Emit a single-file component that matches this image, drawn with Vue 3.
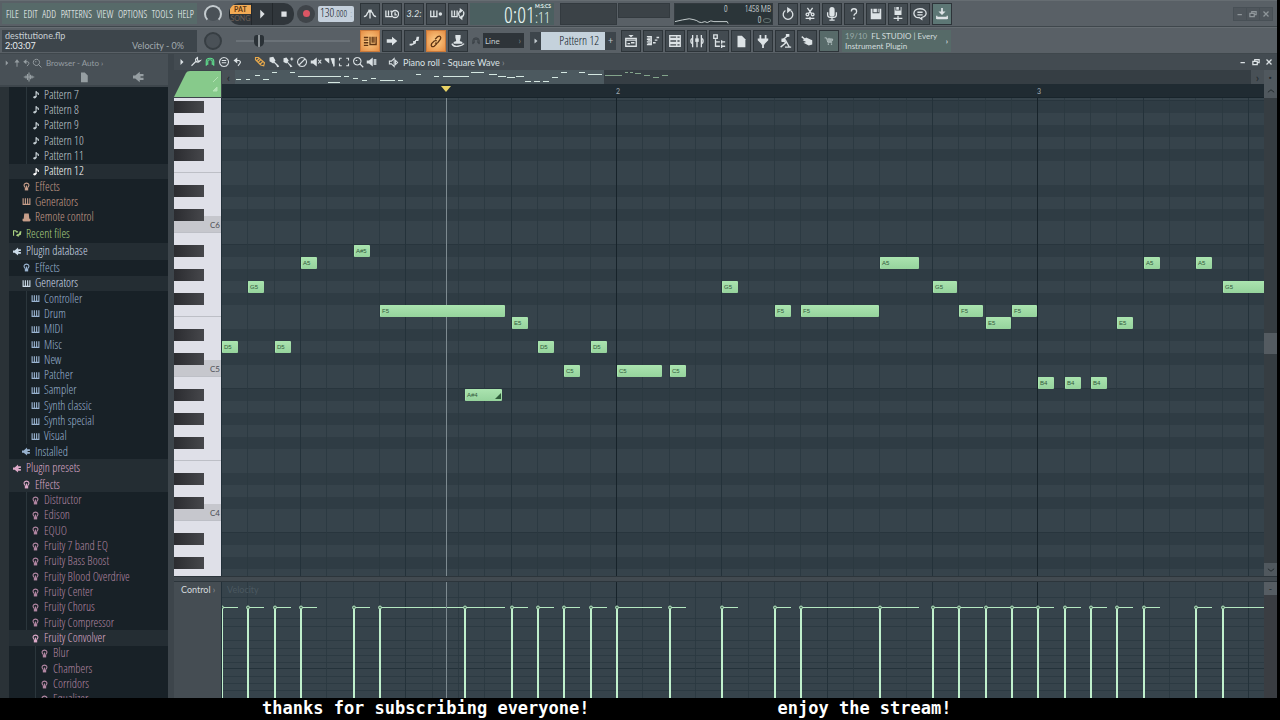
<template>
  <div class="daw">
    <header class="toolbar">
      <div class="bar">
        <nav class="menu">
          <button v-for="m in menus" :key="m" type="button">{{ m }}</button>
        </nav>
        <div class="knob-slot"><span class="knob bright" /></div>
        <div class="transport">
          <button type="button" class="pat-song"><b>PAT</b><i>SONG</i></button>
          <button type="button" aria-label="Play">
            <svg viewBox="0 0 16 16"><path class="f" d="M6 3l5 5-5 5z" /></svg>
          </button>
          <button type="button" aria-label="Stop">
            <svg viewBox="0 0 16 16"><path class="f" d="M5 5h6v6H5z" /></svg>
          </button>
        </div>
        <button type="button" class="record" aria-label="Record"><span /></button>
        <div class="tempo">
          <button type="button" aria-label="Tempo"><b>130</b>.000</button>
          <span>:</span>
        </div>
        <div class="tools">
          <button v-for="n in recTools" :key="n" type="button" class="tool" :aria-label="n">
            <em v-if="n === 'countdown'">3.2:</em>
            <svg v-else viewBox="0 0 16 16">
              <path class="s" :d="icons[n].s" />
              <path class="f" :d="icons[n].f" />
            </svg>
          </button>
        </div>
        <div class="clock"><span>0:01</span><div><sup>M:S:CS</sup><small>:11</small></div></div>
        <div class="panel scope" />
        <div class="panel scope-small" />
        <div class="panel cpu">
          <svg viewBox="0 0 60 20"><path d="M1 18q8-2 15-3 6 1 8 2 2 2 5 2 4-2 6 0 4-3 7-1h14l1 2" /></svg>
          <span>0</span>
          <div><span>1458 MB</span><span>0 <i /></span></div>
        </div>
        <div class="tools right-tools">
          <button
            v-for="n in fileTools"
            :key="n"
            type="button"
            class="tool"
            :class="{ teal: n === 'download' }"
            :aria-label="n"
          >
            <svg viewBox="0 0 16 16">
              <path class="s" :d="icons[n].s" />
              <path class="f" :d="icons[n].f" />
            </svg>
          </button>
        </div>
        <div class="window-buttons raised">
          <button v-for="n in windowTools" :key="n" type="button" :aria-label="n">
            <svg viewBox="0 0 16 16"><path class="s" :d="icons[n].s" /></svg>
          </button>
        </div>
      </div>

      <div class="bar">
        <div class="hint">
          <p>destitutione.flp</p>
          <p><b>2:03:07</b><span>Velocity - 0%</span></p>
        </div>
        <div class="knob-slot"><span class="knob" /></div>
        <div class="shift">
          <input type="range" min="0" max="100" value="17" aria-label="Song position">
        </div>
        <div class="tools">
          <button
            v-for="n in editTools"
            :key="n"
            type="button"
            class="tool"
            :class="{ lit: n === 'typing' || n === 'link' }"
            :aria-label="n"
          >
            <svg viewBox="0 0 16 16">
              <path class="s" :d="icons[n].s" />
              <path class="f" :d="icons[n].f" />
            </svg>
          </button>
        </div>
        <svg class="snap-icon" viewBox="0 0 16 16"><path class="s" :d="icons.magnet.s" /></svg>
        <div class="snap">
          <select aria-label="Snap"><option>Line</option></select>
          <span>›</span>
        </div>
        <div class="pattern">
          <button type="button" aria-label="Pattern menu">
            <svg viewBox="0 0 16 16"><path class="f" d="M5 3l6 5-6 5z" /></svg>
          </button>
          <select aria-label="Pattern"><option>Pattern 12</option></select>
          <button type="button" aria-label="New pattern">+</button>
        </div>
        <div class="tools">
          <button
            v-for="n in viewTools"
            :key="n"
            type="button"
            class="tool"
            :class="{ dim: n === 'cart' }"
            :aria-label="n"
          >
            <svg viewBox="0 0 16 16">
              <path class="s" :d="icons[n].s" />
              <path class="f" :d="icons[n].f" />
            </svg>
          </button>
        </div>
        <a class="news" href="#">
          <span><i>19/10</i>&nbsp; FL STUDIO | Every<br>Instrument Plugin</span><b>›</b>
        </a>
      </div>
    </header>

    <main class="workspace">
      <aside class="browser">
        <div class="browser-head">
          <div class="browser-title">
            <svg v-for="n in ['play', 'up', 'undo', 'zoom']" :key="n" viewBox="0 0 16 16">
              <path class="s" :d="icons[n].s" />
              <path class="f" :d="icons[n].f" />
            </svg>
            <span>Browser - Auto ›</span>
          </div>
          <div class="browser-tabs">
            <button v-for="n in ['wave', 'page', 'plugin']" :key="n" type="button" :aria-label="n">
              <svg viewBox="0 0 16 16">
                <path class="s" :d="icons[n].s" />
                <path class="f" :d="icons[n].f" />
              </svg>
            </button>
          </div>
        </div>
        <div class="tree-view">
          <div class="tree-rail" />
          <ul class="tree">
            <li
              v-for="(row, i) in tree"
              :key="i"
              :class="[row.tone, 'level-' + row.level, { selected: row.selected }]"
            >
              <svg viewBox="0 0 16 16">
                <path class="s" :d="icons[row.icon].s" />
                <path class="f" :d="icons[row.icon].f" />
              </svg>
              <span>{{ row.text }}</span>
            </li>
          </ul>
        </div>
      </aside>

      <section class="roll">
        <div class="roll-title">
          <button
            v-for="n in rollTools"
            :key="n"
            type="button"
            :class="n"
            :aria-label="n"
          >
            <svg viewBox="0 0 16 16">
              <path class="s" :d="icons[n].s" />
              <path class="f" :d="icons[n].f" />
            </svg>
          </button>
          <svg class="roll-speaker" viewBox="0 0 16 16"><path class="s" d="M2 6h3l4-4v12l-4-4H2zM11 5v6l3-3z" /></svg>
          <h1>Piano roll - Square Wave <span>›</span></h1>
          <div class="window-buttons">
            <button v-for="n in windowTools" :key="n" type="button" :aria-label="n">
              <svg viewBox="0 0 16 16"><path class="s" :d="icons[n].s" /></svg>
            </button>
          </div>
        </div>

        <div class="roll-body">
          <div class="corner">
            <svg viewBox="0 0 48 28">
              <path class="tab" d="M0 27L12 3Q13 1 16 1H47V27z" />
              <path class="mark" d="M39 12l5-5M39 21h4v-4z" />
            </svg>
          </div>
          <div class="overview">
            <button type="button" aria-label="Scroll left">‹</button>
            <svg class="mini">
              <rect x="0" y="0" width="369" height="14" />
              <path
                v-for="(m, i) in mini"
                :key="i"
                :class="{ later: m[0] > 369 }"
                :d="`M${m[0]} ${m[1]}.5h${m[2]}`"
              />
            </svg>
            <button type="button" aria-label="Scroll right">›</button>
          </div>
          <button type="button" class="dot-button" aria-label="Zoom">▪</button>
          <div class="ruler">
            <span v-for="b in bars" :key="b.label" :style="{ left: b.x + 'px' }">{{ b.label }}</span>
            <i class="playmark" />
          </div>
          <button type="button" class="scroll-up" aria-label="Scroll up">
            <svg viewBox="0 0 16 16"><path class="s" d="M3 10l5-4 5 4" /></svg>
          </button>

          <div class="keys">
            <div class="lanes">
              <div v-for="r in lanes" :key="r.index" class="key" :class="r.kind">
                <span v-if="r.label">{{ r.label }}</span>
              </div>
            </div>
          </div>
          <div class="grid">
            <div class="lanes">
              <div v-for="r in lanes" :key="r.index" class="lane" :class="r.kind" />
              <div
                v-for="(n, i) in notes"
                :key="i"
                class="note"
                :style="{
                  left: noteX(n) + 'px',
                  top: noteRow(n) * 12 + 'px',
                  width: Math.round(n[2] * STEP) + 'px'
                }"
              >
                {{ n[0] }}<i v-if="n[0] === 'A#4'" />
              </div>
            </div>
            <svg class="lines">
              <line
                v-for="l in gridLines"
                :key="l.x"
                :class="l.kind"
                :x1="l.x"
                :x2="l.x"
                y1="0"
                y2="100%"
              />
            </svg>
            <i class="playhead" />
          </div>
          <div class="scroll-track">
            <div class="thumb" />
            <button type="button" aria-label="Scroll down">
              <svg viewBox="0 0 16 16"><path class="s" d="M3 6l5 4 5-4" /></svg>
            </button>
          </div>

          <div class="splitter" />

          <div class="control-label">Control <span>›</span></div>
          <div class="velocity">
            <span class="ghost">Velocity</span>
            <svg>
              <line
                v-for="y in [15, 36, 44, 58, 66, 73, 80, 94, 101, 108]"
                :key="'h' + y"
                class="sub"
                x1="0"
                x2="100%"
                :y1="y + 0.5"
                :y2="y + 0.5"
              />
              <line class="beat" x1="0" x2="100%" y1="86.5" y2="86.5" />
              <line
                v-for="l in gridLines"
                :key="l.x"
                :class="l.kind"
                :x1="l.x"
                :x2="l.x"
                y1="0"
                y2="100%"
              />
              <g v-for="(n, i) in notes" :key="i" class="stem">
                <path :d="`M${noteX(n)} 25.5h${Math.round(n[2] * STEP)}`" />
                <rect :x="noteX(n) - 1" y="26" width="2" height="100%" />
                <circle :cx="noteX(n)" cy="25.5" r="1.5" />
              </g>
            </svg>
            <i class="playhead" />
          </div>
          <div class="velocity-track"><button type="button" aria-label="Reset">-</button></div>
        </div>
      </section>
    </main>

    <footer class="banner">
      <span>thanks for subscribing everyone!</span>
      <span>enjoy the stream!</span>
    </footer>
  </div>
</template>

<script setup>
const STEP = 26.33
const NAMES = ['C', 'C#', 'D', 'D#', 'E', 'F', 'F#', 'G', 'G#', 'A', 'A#', 'B']
// semitone of the first (partly hidden) lane, counted from C0
const TOP = 6 * 12 + 11

const menus = ['FILE', 'EDIT', 'ADD', 'PATTERNS', 'VIEW', 'OPTIONS', 'TOOLS', 'HELP']
const recTools = ['metronome', 'wait', 'countdown', 'overdub', 'loop']
const fileTools = ['reload', 'cut', 'mic', 'help', 'save', 'saveNew', 'chat', 'download']
const editTools = ['typing', 'arrow', 'slide', 'link', 'stamp']
const viewTools = ['playlist', 'pianoroll', 'steps', 'mixer', 'treeIcon', 'page', 'plug', 'tempoTap', 'hand', 'cart']
const windowTools = ['minimize', 'restore', 'close']
const rollTools = [
  'play', 'wrench', 'magnet', 'options', 'undo', 'pencil', 'brush', 'paint',
  'ban', 'mute', 'slice', 'select', 'zoom', 'speaker'
]

const icons = {
  metronome: { s: 'M1 11q3 0 4-4 1-2 3-2t3 2q1 4 4 4M8 4v9', f: 'M6 3h4v3H6z' },
  wait: { s: 'M1 4v7h7M4 4v6M7 4v2M11.5 4a4 4 0 1 1 0 8a4 4 0 1 1 0-8M11.5 6v3h2', f: '' },
  overdub: { s: 'M2 4v7h7V4M5.5 4v7', f: 'M13 6a2 2 0 1 1 0 4a2 2 0 1 1 0-4' },
  loop: { s: 'M1 4v7h6V4M4 4v6M10 11q-3-4 1-7M14 5q2 4-2 7', f: 'M10 1l4 3-4 3zM13 9l-4 3 4 3z' },
  reload: { s: 'M5 4a5.500 5.500 0 1 0 6 0', f: 'M7 0l5 3-5 4z' },
  cut: { s: 'M5 1l5 7M11 1L6 8M5 7a1.500 1.500 0 1 0 .1 0M11 7a1.500 1.500 0 1 0 .1 0M3 13h10M8 11v4', f: '' },
  mic: { s: 'M3 6v3q0 3 5 3t5-3V6M8 12v3M5 15h6', f: 'M5 3q0-3 3-3t3 3v6q0 2-3 2T5 9z' },
  help: { s: 'M5 5q0-3 3-3t3 3q0 2-2 3-1 1-1 2', f: 'M7 12h2v2H7z' },
  save: { s: '', f: 'M2 2h2v5h8V2h2v12H2zM5 2h4v4H5zM10 2h1v4h-1z' },
  saveNew: { s: 'M3 13h10M8 10v6', f: 'M4 0h1v4h6V0h1v9H4zM6 0h3v3H6z' },
  chat: { s: 'M8 2C3 2 1 5 1 7.500S4 13 7 12l3 2v-2c3-1 5-2 5-5S12 2 8 2M5 6h6M5 9h6', f: '' },
  download: { s: 'M2 10v3h12v-3', f: 'M7 1h2v4h3l-4 4-4-4h3zM2 11h12v3H2z' },
  typing: { s: 'M1 4h5M1 7h5M1 10h5M1 13h5M8 3v9h7V3M10.500 3v7M12.500 3v7', f: '' },
  arrow: { s: '', f: 'M2 6h6V3l6 5-6 5v-3H2z' },
  slide: { s: 'M5 12q4 0 5-5', f: 'M11 3h3l-1 5h-3zM7 8h3v3H7zM3 11h3v2H3z' },
  link: { s: 'M7 6l3-3q2-1 3 0t0 3l-3 4q-2 1-3 0M9 8q-1-1-3 0l-3 3q-1 2 0 3t3 0l3-3', f: '' },
  stamp: { s: 'M1 11q2 4 7 3t7-3', f: 'M5 1h6v3l-1 4 3 1v2H3V9l3-1-1-4z' },
  magnet: { s: 'M3 13V7q0-4 5-4t5 4v6M3 11h2v-4q0-2 3-2t3 2v4h2', f: '' },
  playlist: { s: 'M2 5h12v9H2zM2 7h12M4 11h3M8 10h4', f: 'M5 1h6L8 4z' },
  pianoroll: { s: 'M1 3h5v9H1M1 6h4M1 9h4M8 10h3M10 7h3M12 4h3', f: 'M2 4h4v1H2zM2 7h4v1H2zM2 10h4v1H2z' },
  steps: { s: 'M2 2h12v3H2zM2 6.500h12v3H2zM2 11h12v3H2zM10 2v12', f: '' },
  mixer: { s: 'M3 1v14M8 1v14M13 1v14M2 5q-2 3 0 6M14 5q2 3 0 6', f: 'M6 5h4v4H6z' },
  treeIcon: { s: 'M2 1h4v4H2zM4 6v8h5M4 9h5M11 7v4M11 9h4M11 12v4M11 14h4', f: '' },
  page: { s: '', f: 'M4 2h5l4 4v9H4z' },
  plug: { s: '', f: 'M4 1h2v4h4V1h2v4h2v2l-4 4v1H9v4H7v-4H6v-1L2 7V5h2z' },
  tempoTap: { s: 'M11 2L5 7l4 3-6 5M8 6l5 9M8 15h7', f: 'M9 0h4v3H9zM4 5h4v4H4z' },
  hand: { s: 'M2 3l6 5', f: 'M3 7l4-3 7 3v5l-4 1-6-3 3-1z' },
  cart: { s: 'M1 3h3l2 7h7M5 5h9l-1 3H6M8 3v7M11 4v6', f: 'M6 12h2v2H6zM11 12h2v2h-2z' },
  minimize: { s: 'M4 9h7', f: '' },
  restore: { s: 'M3 7h7v5H3zM6 7V4h7v5h-3', f: '' },
  close: { s: 'M4 4l8 8M12 4l-8 8', f: '' },
  play: { s: '', f: 'M6 4l4 4-4 4z' },
  up: { s: 'M8 14V5', f: 'M4 7l4-5 4 5z' },
  undo: { s: 'M6 6h3q3 1 2 3t-3 4', f: 'M2 6l5-4v8z' },
  zoom: { s: 'M7 2a5 5 0 1 0 .1 0M11 11l4 4M5 6h2', f: '' },
  wave: { s: 'M1 8h14M4 6v4M6 4v8M8 2v12M10 5v6M12 6v4', f: '' },
  plugin: { s: '', f: 'M0 6h3l6-5v3h5v3h-4v2h4v3H9v3l-6-5H0z' },
  wrench: { s: 'M2 13l6-6M10 2q-4 2-2 5 3 3 6-1l-3 1-1-2z', f: '' },
  options: { s: 'M8 2a6 6 0 1 0 .1 0M5 6h6M5 9h6', f: '' },
  pencil: { s: 'M2 2l4 0 8 7-1 4-4-1-7-7zM4 6l3-3M8 11l4-4M6 8l3-3', f: '' },
  brush: { s: 'M8 8l6 6', f: 'M2 2l5-1 3 5-3 4-5-3zM11 10l4 4-3 1z' },
  paint: { s: 'M7 8l5 6M11 4h4M13 2v4', f: 'M2 3l4-1 3 4-3 4-4-2zM10 10l4 4-3 1z' },
  ban: { s: 'M8 2a6 6 0 1 0 .1 0M4 12l8-8', f: '' },
  mute: { s: 'M11 5l4 5M15 5l-4 5', f: 'M1 6h3l5-4v12l-5-4H1z' },
  slice: { s: 'M9 4h4v10', f: 'M1 3h6v7L1 5zM9 3h5v11l-3-4z' },
  select: { s: 'M2 6V3h3M11 3h3v3M14 10v3h-3M5 13H2v-3', f: '' },
  speaker: { s: 'M11 4v8M13 4v8', f: 'M1 6h3l5-4v12l-5-4H1z' },
  note: { s: 'M9 12V2q1 3 4 4v3', f: 'M10 10v2q-1 3-4 3-3-1-2-3 2-2 6-2z' },
  fx: { s: 'M6 10q-4-4-1-7 3-2 6 0 3 3-1 7M8 11V6', f: 'M5 10h6v5H5z' },
  gen: { s: 'M2 2v11h12V2M6 2v10M10 2v10', f: '' },
  remote: { s: 'M2 14h12', f: 'M4 1h8l1 9h2v4H1v-4h2z' },
  folder: { s: 'M1 12V3h4l1 2h3', f: 'M12 4l3 0-1 6-4 2v2l-5-3 5-3v2z' }
}

const item = (text, icon, tone, level, selected = false) => ({ text, icon, tone, level, selected })

const tree = [
  ...[7, 8, 9, 10, 11].map((n) => item('Pattern ' + n, 'note', 'pat', 3)),
  item('Pattern 12', 'note', 'pat', 3, true),
  item('Effects', 'fx', 'brown', 2),
  item('Generators', 'gen', 'brown', 2),
  item('Remote control', 'remote', 'brown', 2),
  item('Recent files', 'folder', 'green', 1),
  item('Plugin database', 'plugin', 'steel', 1, true),
  item('Effects', 'fx', 'blue', 2),
  item('Generators', 'gen', 'steel', 2, true),
  ...['Controller', 'Drum', 'MIDI', 'Misc', 'New', 'Patcher', 'Sampler', 'Synth classic', 'Synth special', 'Visual']
    .map((t) => item(t, 'gen', 'blue', 3)),
  item('Installed', 'plugin', 'blue', 2),
  item('Plugin presets', 'plugin', 'pink', 1, true),
  item('Effects', 'fx', 'pink', 2, true),
  ...['Distructor', 'Edison', 'EQUO', 'Fruity 7 band EQ', 'Fruity Bass Boost', 'Fruity Blood Overdrive', 'Fruity Center', 'Fruity Chorus', 'Fruity Compressor']
    .map((t) => item(t, 'fx', 'plum', 3)),
  item('Fruity Convolver', 'fx', 'pink', 3, true),
  ...['Blur', 'Chambers', 'Corridors', 'Equalizer'].map((t) => item(t, 'fx', 'plum', 4))
]

const lanes = Array.from({ length: 42 }, (_, index) => {
  const semi = TOP - index
  const name = NAMES[semi % 12]
  const kind = name === 'C#' ? 'black c-sharp' : name.includes('#') ? 'black' : 'white ' + name.toLowerCase()
  return { index, kind, label: name === 'C' ? 'C' + Math.floor(semi / 12) : '' }
})

// [pitch, start step, length in steps]
const notes = [
  ['D5', 0, 0.62], ['G5', 1, 0.62], ['D5', 2, 0.62], ['A5', 3, 0.62], ['A#5', 5, 0.62],
  ['F5', 6, 4.75], ['A#4', 9.23, 1.4], ['E5', 11, 0.62], ['D5', 12, 0.62], ['C5', 13, 0.62],
  ['D5', 14, 0.62], ['C5', 15, 1.72], ['C5', 17, 0.62], ['G5', 19, 0.62], ['F5', 21, 0.62],
  ['F5', 22, 2.97], ['A5', 25, 1.5], ['G5', 27, 0.93], ['F5', 28, 0.93], ['E5', 29, 0.96],
  ['F5', 30, 0.96], ['B4', 31, 0.62], ['B4', 32, 0.62], ['B4', 33, 0.62], ['E5', 34, 0.62],
  ['A5', 35, 0.62], ['A5', 37, 0.62], ['G5', 38, 3]
]

function noteX(n) {
  return Math.round(n[1] * STEP)
}

function noteRow(n) {
  const pitch = n[0].slice(0, -1)
  return TOP - (Number(n[0].slice(-1)) * 12 + NAMES.indexOf(pitch))
}

const gridLines = Array.from({ length: 80 }, (_, i) => ({
  x: Math.round(i * STEP) - 0.5,
  kind: i % 16 === 15 ? 'bar-line' : i % 4 === 3 ? 'beat' : 'sub'
}))

const bars = [
  { label: '2', x: 394 },
  { label: '3', x: 815 }
]

// overview dashes: [x, y, width]
const mini = [
  [1, 9, 5], [11, 9, 4], [20, 5, 5], [28, 9, 6], [37, 2, 5], [55, 2, 5], [63, 6, 43], [93, 12, 12],
  [109, 6, 5], [118, 8, 5], [127, 10, 5], [136, 8, 5], [145, 10, 15], [163, 10, 5], [181, 4, 5],
  [199, 6, 5], [208, 6, 26], [236, 2, 13], [254, 4, 8], [263, 6, 8], [272, 7, 8], [281, 6, 8],
  [290, 11, 6], [299, 11, 6], [308, 11, 6], [317, 7, 6], [326, 2, 6], [344, 2, 6], [353, 4, 14],
  [370, 5, 17], [390, 2, 3], [395, 2, 3], [400, 3, 6], [409, 5, 6], [418, 7, 6], [427, 5, 6]
]
</script>

<style>
body {
  background: #000;
}
</style>

<style scoped>
.daw {
  display: flex;
  flex-direction: column;
  height: 100vh;
  padding-right: 3px;
  box-sizing: border-box;
  overflow: hidden;
  background: #000;
  color: #c3cbd0;
  font-family: "Lato", "Open Sans", sans-serif;
  font-size: 9px;
}
button, select, input {
  margin: 0;
  padding: 0;
  border: 0;
  background: none;
  color: inherit;
  font: inherit;
  appearance: none;
}
button {
  display: flex;
  align-items: center;
  justify-content: center;
}
svg {
  flex: none;
}
.s {
  fill: none;
  stroke: currentColor;
  stroke-width: 1.5;
}
.f {
  fill: currentColor;
}

/* toolbar */
.toolbar {
  flex: none;
  background: #596066;
}
.bar {
  display: flex;
  align-items: center;
  height: 27px;
  padding: 0 5px 0 2px;
  box-sizing: border-box;
  border-bottom: 1px solid #3f474c;
  border-top: 1px solid #666d72;
}
.menu {
  display: flex;
  justify-content: space-between;
  align-items: center;
  width: 195px;
  height: 21px;
  padding: 0 3px 0 4px;
  box-sizing: border-box;
  background: #576a69;
  color: #f2f8f8;
  font-family: "Open Sans Condensed Light", "Open Sans Condensed", "Liberation Sans Narrow", sans-serif;
  font-size: 10px;
  font-weight: 300;
}
.knob-slot {
  display: flex;
  justify-content: center;
  width: 32px;
}
.knob {
  width: 14px;
  height: 14px;
  border: 2px solid #373e43;
  border-radius: 50%;
  background: #4a5157;
}
.knob.bright {
  border-color: #c4cbcf;
  border-bottom-color: #596066;
}
.transport {
  display: flex;
  width: 65px;
  height: 22px;
  border-radius: 10px;
  overflow: hidden;
  background: #30363b;
  color: #dde1e4;
}
.transport button {
  flex: 1;
  border-left: 1px solid #23282c;
}
.transport svg {
  width: 14px;
  height: 14px;
}
.transport .pat-song {
  flex-direction: column;
  font-size: 7px;
  line-height: 9px;
}
.pat-song b {
  width: 100%;
  background: #f3ab55;
  color: #5c3411;
}
.pat-song i {
  color: #6f6259;
  font-style: normal;
}
.record {
  width: 18px;
  height: 18px;
  margin: 0 3px;
  border-radius: 50%;
  background: #3f4449;
}
.record span {
  width: 7px;
  height: 7px;
  border-radius: 50%;
  background: #db5664;
}
.tempo {
  display: flex;
  align-items: center;
  justify-content: space-between;
  width: 36px;
  height: 16px;
  margin-right: 6px;
  padding: 0 2px;
  box-sizing: border-box;
  border-radius: 2px;
  background: #c5d0dc;
  color: #10181f;
  font-family: "Open Sans Condensed Light", "Liberation Sans", sans-serif;
  font-size: 9px;
  line-height: 16px;
}
.tempo button {
  align-items: baseline;
}
.tempo b {
  font-size: 12px;
  font-weight: normal;
}
.tempo span {
  color: #7f8a94;
}
.tools {
  display: flex;
  gap: 2px;
}
.tool {
  width: 20px;
  height: 22px;
  border: 1px solid #2d3439;
  box-sizing: border-box;
  background: #434b51;
  color: #dde3e6;
}
.tool svg {
  width: 14px;
  height: 14px;
}
.tool em {
  font-size: 9px;
}
.tool.lit {
  background: radial-gradient(#ffd08a, #e58d43);
  border-color: #c9793a;
  color: #5f3413;
}
.tool.teal {
  background: #5d7775;
}
.tool.dim {
  background: #576a69;
  color: #b6c3c3;
}
.tool.dim svg {
  width: 10px;
  height: 10px;
}
.clock {
  display: flex;
  justify-content: flex-end;
  width: 84px;
  height: 22px;
  margin: 0 6px 0 2px;
  padding-right: 3px;
  box-sizing: border-box;
  background: #4b5f60;
  color: #e6f4f0;
  font-family: "Open Sans Condensed Light", "Liberation Sans", sans-serif;
  font-size: 22px;
  font-weight: 300;
  line-height: 22px;
}
.clock div {
  display: flex;
  flex-direction: column;
}
.clock small {
  font-size: 15px;
  line-height: 16px;
}
.clock sup {
  font-family: "Lato", sans-serif;
  font-size: 5px;
  font-weight: bold;
  line-height: 6px;
}
.panel {
  background: #3b4247;
  box-shadow: inset 0 0 0 1px #333a3f;
}
.scope {
  width: 57px;
  height: 22px;
}
.scope-small {
  align-self: flex-start;
  width: 52px;
  height: 15px;
  margin: 2px 4px 0 1px;
}
.cpu {
  display: flex;
  width: 99px;
  height: 22px;
  margin-right: 5px;
  background: #2b3539;
  color: #e2e9eb;
  font-family: "Open Sans Condensed Light", "Liberation Sans", sans-serif;
  line-height: 11px;
}
.cpu svg {
  width: 57px;
  height: 22px;
  margin-right: -7px;
}
.cpu path {
  fill: none;
  stroke: #cbd3d4;
}
.cpu div {
  display: flex;
  flex: 1;
  flex-direction: column;
  align-items: flex-end;
  padding-right: 2px;
}
.cpu i {
  display: inline-block;
  width: 6px;
  height: 3px;
  border: 1px solid #62706f;
  border-radius: 50%;
}
.window-buttons {
  display: flex;
  gap: 1px;
  margin-left: auto;
}
.window-buttons button {
  width: 12px;
  height: 12px;
}
.window-buttons svg {
  width: 10px;
  height: 10px;
}
.window-buttons .s {
  stroke-width: 2;
}
.raised {
  color: #8f969a;
}
.raised button {
  background: #4f565c;
  box-shadow: 0 0 0 1px #485056;
}
.hint {
  width: 195px;
  height: 22px;
  padding: 1px 5px 0 3px;
  box-sizing: border-box;
  background: #3d454b;
  color: #c7cfd3;
}
.hint p {
  display: flex;
  justify-content: space-between;
  margin: 0;
  line-height: 10px;
}
.hint b {
  color: #e8edf0;
  font-weight: normal;
}
.hint span {
  padding-right: 8px;
  color: #a3abb0;
}
.shift {
  display: flex;
  width: 131px;
  padding: 0 10px 0 7px;
  box-sizing: border-box;
}
.shift input {
  width: 100%;
  height: 14px;
  background: linear-gradient(#6b7278, #6b7278) center / 100% 2px no-repeat;
}
.shift input::-webkit-slider-thumb {
  width: 10px;
  height: 12px;
  border-radius: 3px 3px 6px 6px;
  background: linear-gradient(90deg, #2b3237 4px, #8b9296 4px, #8b9296 6px, #2b3237 6px);
  appearance: none;
}
.snap-icon {
  width: 10px;
  height: 10px;
  margin: 0 2px 0 3px;
  color: #363d42;
}
.snap {
  display: flex;
  align-items: center;
  width: 41px;
  height: 15px;
  padding: 0 3px 0 2px;
  box-sizing: border-box;
  background: #2e3439;
  color: #c3cacd;
}
.snap select {
  flex: 1;
  min-width: 0;
  font-size: 8px;
}
.snap span {
  color: #7b8488;
}
.pattern {
  display: flex;
  align-items: stretch;
  width: 86px;
  height: 18px;
  margin: 0 5px 0 6px;
}
.pattern button {
  width: 11px;
  background: #3d454b;
}
.pattern svg {
  width: 8px;
  height: 8px;
}
.pattern select {
  flex: 1;
  min-width: 0;
  padding-right: 6px;
  background: #c5d2dc;
  color: #10181f;
  font-family: "Open Sans Condensed Light", "Open Sans Condensed", "Liberation Sans Narrow", sans-serif;
  font-size: 12px;
  font-weight: 300;
  text-align-last: right;
}
.news {
  display: flex;
  justify-content: space-between;
  align-items: center;
  width: 109px;
  height: 22px;
  margin-left: 3px;
  padding: 0 3px;
  box-sizing: border-box;
  background: #566a68;
  color: #d2dcdc;
  font-size: 8px;
  line-height: 10px;
  text-decoration: none;
}
.news i {
  color: #9cacab;
  font-style: normal;
}

/* browser */
.workspace {
  display: flex;
  flex: 1;
  min-height: 0;
  background: #3d454b;
}
.browser {
  display: flex;
  flex: none;
  flex-direction: column;
  width: 168px;
  background: #182127;
}
.browser-head {
  flex: none;
  height: 33px;
  box-sizing: border-box;
  background: #485056;
  border-bottom: 2px solid #3e464c;
  color: #969ea2;
}
.browser-title {
  display: flex;
  align-items: center;
  height: 17px;
  padding-left: 2px;
}
.browser-title svg {
  width: 10px;
  height: 10px;
}
.browser-title span {
  margin-left: 4px;
  font-size: 8px;
}
.browser-tabs {
  display: flex;
  justify-content: space-between;
  padding: 0 23px;
}
.browser-tabs svg {
  width: 12px;
  height: 12px;
}
.tree-view {
  display: flex;
  flex: 1;
  min-height: 0;
  overflow: hidden;
}
.tree-rail {
  width: 9px;
  background: #2a3237;
}
.tree {
  display: flex;
  flex: 1;
  flex-direction: column;
  height: calc(100% + 9px);
  margin: 0;
  padding: 0;
  list-style: none;
  font-family: "Open Sans Condensed Light", "Open Sans Condensed", "Liberation Sans Narrow", sans-serif;
  font-size: 12px;
  font-weight: 300;
}
.tree li {
  display: flex;
  flex: 20 1 0;
  align-items: center;
  gap: 4px;
  min-height: 0;
  box-sizing: border-box;
  line-height: 14px;
}
.tree svg {
  width: 9px;
  height: 9px;
}
.tree .s {
  stroke-width: 2;
}
.tree .level-1 {
  flex-grow: 23;
  padding-left: 4px;
}
.level-2 {
  padding-left: 13px;
}
.level-3 {
  padding-left: 22px;
  background: linear-gradient(#2b363c, #2b363c) 17px 0 / 1px 100% no-repeat;
}
.level-4 {
  padding-left: 31px;
  background: linear-gradient(#2b363c, #2b363c) 26px 0 / 1px 100% no-repeat;
}
.selected {
  background: #242d33;
}
.pat {
  color: #c0cacf;
}
.pat.selected {
  color: #fff;
}
.brown {
  color: #c69d89;
}
.green {
  color: #aad282;
}
.steel {
  color: #cddce9;
}
.blue {
  color: #98b2cf;
}
.pink {
  color: #dca9c8;
}
.plum {
  color: #b085a1;
}

/* piano roll */
.roll {
  display: flex;
  flex: 1;
  flex-direction: column;
  min-width: 0;
  margin-left: 6px;
}
.roll-title {
  display: flex;
  flex: none;
  align-items: center;
  height: 16px;
  padding: 0 2px 0 1px;
  background: #434b51;
  color: #dbe1e4;
}
.roll-title > button {
  width: 14px;
}
.roll-title > button svg {
  width: 12px;
  height: 12px;
}
.roll-title .undo {
  margin-right: 8px;
}
.roll-title .magnet {
  color: #5fe08e;
}
.roll-title .pencil {
  color: #e8a94c;
}
.roll-speaker {
  width: 11px;
  height: 11px;
  margin: 0 4px 0 9px;
}
.roll-title h1 {
  margin: 0;
  font-size: 9px;
  font-weight: normal;
}
.roll-title h1 span {
  color: #8c9499;
}
.roll-body {
  display: grid;
  flex: 1;
  grid-template-columns: 48px 1fr 13px;
  grid-template-rows: 14px 14px 1fr 6px 116px;
  min-height: 0;
}
.corner {
  grid-row: span 2;
  background: #3d454b;
}
.corner svg {
  display: block;
  width: 48px;
  height: 28px;
}
.tab {
  fill: #87ca8b;
}
.mark {
  fill: #b4e3b5;
  stroke: #b4e3b5;
}
.overview {
  display: flex;
  min-width: 0;
  background: #363e44;
}
.overview button {
  width: 13px;
  background: #485056;
  color: #20272b;
  font-size: 12px;
}
.mini {
  flex: 1;
  min-width: 0;
  height: 14px;
}
.mini rect {
  fill: #4c595f;
}
.mini path {
  stroke: #d5e8e2;
}
.mini .later {
  stroke: #83a48b;
}
.dot-button, .scroll-up {
  background: #50585e;
  color: #20272b;
  font-size: 7px;
}
.scroll-up svg, .scroll-track svg {
  width: 10px;
  height: 10px;
}
.ruler {
  position: relative;
  overflow: hidden;
  background: #202b32;
  border-bottom: 1px solid #18242b;
  color: #a3adb2;
  font-size: 7px;
  line-height: 14px;
}
.ruler span {
  position: absolute;
}
.playmark {
  position: absolute;
  left: 219px;
  top: 2px;
  border: 5px solid transparent;
  border-top: 6px solid #e9d365;
  border-bottom: 0;
}
.keys, .grid {
  position: relative;
  min-width: 0;
  min-height: 0;
  overflow: hidden;
}
.keys {
  background: #dfe0e8;
  border-right: 1px solid #223039;
}
.lanes {
  position: relative;
  margin-top: -9px;
}
.key, .lane {
  height: 12px;
  box-sizing: border-box;
}
.key.c, .key.f {
  border-bottom: 1px solid #bdbfc6;
}
.key.c {
  background: #c6c7cd;
}
.key.c-sharp {
  background: linear-gradient(transparent 7px, #c6c7cd 7px);
}
.key.black::before {
  content: "";
  display: block;
  width: 30px;
  height: 12px;
  background: linear-gradient(90deg, #2b2c30, #46474b);
}
.key span {
  display: block;
  padding-right: 1px;
  color: #4d5056;
  font-size: 8px;
  line-height: 8px;
  text-align: right;
}
.lane {
  background: #36434b;
}
.lane.black {
  background: #2f3c44;
}
.lane.b {
  border-bottom: 1px solid #28353d;
}
.note {
  position: absolute;
  height: 12px;
  padding-left: 1px;
  box-sizing: border-box;
  overflow: hidden;
  background: linear-gradient(#a9e2ae, #95d39c);
  border: 1px solid #a9e5ae;
  border-width: 1px 0 0 1px;
  border-radius: 1px;
  z-index: 1;
  color: #31593b;
  font-family: "Liberation Sans", sans-serif;
  font-size: 6px;
  line-height: 11px;
}
.note i {
  position: absolute;
  right: 1px;
  bottom: 2px;
  border: 3px solid #2f5b3a;
  border-top-color: transparent;
  border-left-color: transparent;
}
.lines {
  position: absolute;
  inset: 0;
  width: 100%;
  height: 100%;
}
.sub {
  stroke: #2a3840;
  stroke-opacity: .8;
}
.beat {
  stroke: #24323a;
}
.bar-line {
  stroke: #17232a;
}
.playhead {
  position: absolute;
  top: 0;
  bottom: 0;
  left: 224px;
  width: 1px;
  background: #7d8a90;
}
.scroll-track {
  display: flex;
  flex-direction: column;
  justify-content: space-between;
  background: #363d42;
}
.thumb {
  height: 21px;
  margin-top: 235px;
  background: #545b61;
}
.scroll-track button {
  height: 13px;
  background: #50585e;
  color: #20272b;
}
.splitter {
  grid-column: 1 / -1;
  background: #424a50;
  border-top: 1px solid #2c353b;
  border-bottom: 1px solid #2c353b;
  box-sizing: border-box;
}
.control-label {
  padding: 2px 0 0 7px;
  background: #454d53;
  border-right: 1px solid #223039;
  color: #d5dbde;
  font-size: 9px;
}
.control-label span {
  color: #8c9499;
}
.velocity {
  position: relative;
  min-width: 0;
  overflow: hidden;
  background: #36434b;
}
.velocity svg {
  display: block;
  width: 100%;
  height: 116px;
}
.ghost {
  position: absolute;
  left: 5px;
  top: 2px;
  color: #4a5860;
}
.stem path {
  stroke: #b4e8c0;
}
.stem rect {
  fill: #c0f0cc;
}
.stem circle {
  fill: #5a7a68;
  stroke: #b4e8c0;
}
.velocity-track {
  background: #3a3d42;
}
.velocity-track button {
  width: 100%;
  height: 13px;
  background: #565d63;
  color: #20272b;
}

/* stream caption */
.banner {
  display: flex;
  flex: none;
  gap: 188px;
  height: 22px;
  padding-left: 262px;
  background: #000;
  color: #fff;
  font-family: "DejaVu Sans Mono", "Liberation Mono", monospace;
  font-size: 17px;
  font-weight: bold;
  line-height: 20px;
  white-space: nowrap;
}
</style>
